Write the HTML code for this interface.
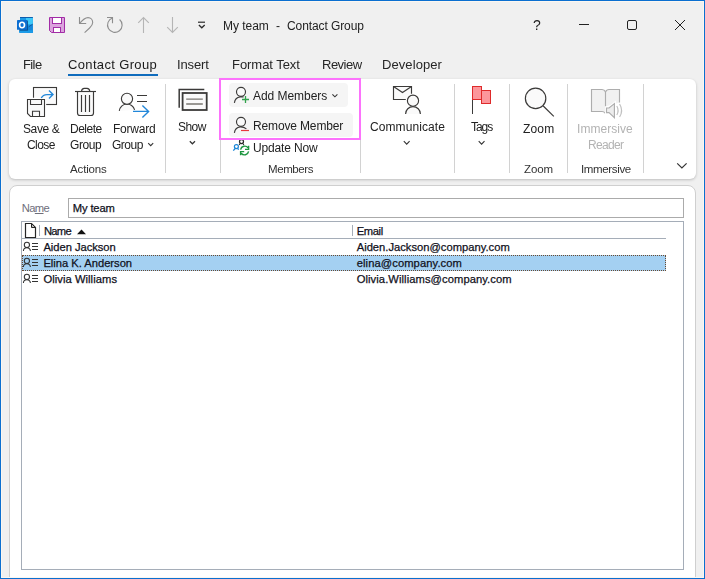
<!DOCTYPE html>
<html><head><meta charset="utf-8"><title>My team - Contact Group</title>
<style>
html,body{margin:0;padding:0}
body{width:705px;height:579px;overflow:hidden;background:#f0f0f0;font-family:"Liberation Sans",sans-serif;color:#222;position:relative}
.a{position:absolute}
.t{position:absolute;white-space:nowrap;line-height:16px;height:16px}
.g{will-change:transform}
.b{-webkit-text-stroke:0.25px #101020}
.t u{text-decoration-thickness:1px;text-underline-offset:1px}
#win{position:absolute;left:0;top:0;width:703px;height:577px;border:1px solid #0b6fd0;box-shadow:inset 0 0 0 1px #fbf7f1;z-index:9;pointer-events:none}
#ribbon{position:absolute;left:9px;top:79px;width:687px;height:100px;background:#fff;border-radius:6px;box-shadow:0 1px 3px rgba(0,0,0,.22)}
#panel{position:absolute;left:9px;top:185px;width:685px;height:400px;background:#fff;border:1px solid #cfcfcf;border-radius:8px 8px 0 0}
.sep{position:absolute;top:84px;height:89px;width:1px;background:#d2d2d2}
.btn{position:absolute;background:#f5f5f5;border-radius:4px}
svg{position:absolute;left:0;top:0;overflow:visible}
</style></head><body>
<div id="ribbon"></div>
<div id="panel"></div>
<div class="a" style="left:68px;top:74px;width:90px;height:2px;background:#0f6cbd"></div>
<div class="sep" style="left:165px"></div>
<div class="sep" style="left:220px"></div>
<div class="sep" style="left:360px"></div>
<div class="sep" style="left:454px"></div>
<div class="sep" style="left:509px"></div>
<div class="sep" style="left:567px"></div>
<div class="sep" style="left:643px"></div>
<div class="btn" style="left:229px;top:83px;width:119px;height:24px"></div>
<div class="btn" style="left:229px;top:113px;width:124px;height:24px"></div>
<!-- name field and list -->
<div class="a" style="left:68px;top:198px;width:614px;height:18px;border:1px solid #ababab;background:#fff"></div>
<div class="a" style="left:21px;top:221px;width:661px;height:347px;border:1px solid #a5adb8;background:#fff"></div>
<div class="a" style="left:22px;top:238px;width:644px;height:1px;background:#a5adb8"></div>
<div class="a" style="left:39px;top:225px;width:1px;height:11px;background:#a5adb8"></div>
<div class="a" style="left:352px;top:225px;width:1px;height:11px;background:#a5adb8"></div>
<div class="a" style="left:22px;top:255px;width:642px;height:14px;background:#a4d0f2;border:1px dotted #6b4a30"></div>
<svg width="705" height="579" viewBox="0 0 705 579" fill="none" stroke-linecap="butt">
<!-- outlook -->
<g stroke="none">
<rect x="20" y="17" width="12.8" height="15.8" fill="#1793e2"/>
<rect x="25.8" y="17.6" width="7" height="6.8" fill="#3ec9f9"/>
<rect x="20" y="17.6" width="5.8" height="3" fill="#1c9ae6"/>
<rect x="20" y="17" width="12.8" height="0.8" fill="#0b4fa0"/>
<path d="M27 28 L32.8 24.3 V32.8 H27 Z" fill="#1487da"/>
<path d="M28.6 26.8 L32.8 24.1" stroke="#0b4a8c" stroke-width="0.7"/>
<rect x="19" y="30.3" width="13.8" height="2.5" fill="#1b9ce9"/>
<rect x="19.2" y="20.6" width="8.7" height="10" fill="#0a3d78" opacity="0.85"/>
<rect x="17" y="20" width="10.1" height="9.8" rx="0.4" fill="#0c6ed1"/>
<ellipse cx="22.05" cy="25" rx="2.45" ry="2.7" stroke="#fff" stroke-width="1.6" fill="none"/>
</g>
<!-- save -->
<path d="M49.5 17.5 H64.5 V32.5 H51.5 L49.5 30.5 Z" fill="#dba3dd" stroke="#a22ca6"/>
<rect x="52.5" y="17.5" width="9" height="6" fill="#fff" stroke="#a22ca6"/>
<rect x="53.5" y="27.5" width="7" height="5" fill="#fff" stroke="#a22ca6"/>
<!-- undo redo -->
<g stroke="#8e8e8e" stroke-width="1.1">
<path d="M79.5 17 V23.5 H86.2"/>
<path d="M79.6 23.4 C82.5 19.8 85.3 17.6 88 17.6 C91 17.6 92.7 20 92.7 22.5 C92.7 25 91.2 26.5 89.6 28 L84.6 32.6"/>
<path d="M107 17.5 H112.5 V23.2"/>
<path d="M112.5 18.1 A7.3 7.3 0 1 0 119.6 19.5"/>
</g>
<g stroke="#b5b5b5" stroke-width="1.1">
<path d="M143.5 33 V18 M138.2 22.9 L143.5 17.6 L148.8 22.9"/>
<path d="M172.5 17 V32 M167.2 27.1 L172.5 32.4 L177.8 27.1"/>
</g>
<path d="M198 22.2 H205" stroke="#2b2b2b" stroke-width="1.2"/><path d="M198.9 25 L201.8 27.8 L204.7 25" stroke="#2b2b2b" stroke-width="1.3"/>
<!-- window controls -->
<g stroke="#222" stroke-width="1">
<path d="M579 24.5 H589"/>
<rect x="627.5" y="20.5" width="9" height="9" rx="1.5"/>
<path d="M675 20 L685 30 M685 20 L675 30"/>
</g>
<!-- save & close -->
<g stroke="#3b3a39" stroke-width="1.1">
<rect x="33.5" y="87.5" width="23" height="17" fill="#fafafa"/>
<path d="M27.5 99.5 H44.5 V116.5 H30.5 L27.5 113.5 Z" fill="#fff" stroke="#fff" stroke-width="3.4"/>
<path d="M27.5 99.5 H44.5 V116.5 H30.5 L27.5 113.5 Z" fill="#fafafa"/>
<path d="M30.5 99.5 V104.5 H41.5 V99.5 M32.5 116.5 V111.2 H39.5 V116.5"/>
</g>
<path d="M41.3 98 C42.5 95.5 44.5 94.6 47 94.6 H52.6 M49 90.6 L53 94.6 L49 98.6" stroke="#2287d9" stroke-width="1.4"/>
<!-- trash -->
<g stroke="#3b3a39" stroke-width="1.15">
<path d="M81.5 91.5 Q81.7 88.4 84.3 88.4 H87 Q89.6 88.4 89.8 91.5"/>
<path d="M77.5 91.5 V113 Q77.5 115.5 80 115.5 H91 Q93.5 115.5 93.5 113 V91.5" fill="#fafafa"/>
<path d="M81.5 95 V112 M85.5 95 V112 M89.5 95 V112"/>
<path d="M75 91.5 H96"/>
</g>
<!-- forward group -->
<g stroke="#3b3a39" stroke-width="1.15">
<path d="M119.3 110.9 A7.8 7.8 0 0 1 134.6 109.8" fill="#fafafa"/>
<circle cx="127" cy="98.8" r="5.6" fill="#fafafa"/>
<path d="M137 95.5 H147 M137 101.5 H147"/>
</g>
<path d="M133 111.4 H148.4 M142.4 105.4 L148.6 111.4 L142.4 117.4" stroke="#2287d9" stroke-width="1.4"/>
<path d="M148.2 143.2 L150.7 145.7 L153.2 143.2" stroke="#333" stroke-width="1.1"/>
<!-- show -->
<path d="M179.2 107.7 V89.4 H204.3" stroke="#3b3a39" stroke-width="1.5"/>
<rect x="182.6" y="93" width="24.1" height="17" stroke="#3b3a39" stroke-width="1.8" fill="#fafafa"/>
<path d="M186.2 99.2 H202.8 M186.2 104 H202.8" stroke="#7a7772" stroke-width="1.3"/>
<path d="M189.8 141.3 L192.4 143.8 L195 141.3" stroke="#333" stroke-width="1.2"/>
<!-- add member -->
<g stroke="#3b3a39" stroke-width="1.15">
<circle cx="241" cy="91.8" r="4.5" fill="#fafafa"/>
<path d="M234.4 102.9 C234.8 99.4 237 97.3 240.2 96.9 H243.6"/>
<circle cx="241" cy="121.8" r="4.5" fill="#fafafa"/>
<path d="M234.4 132.9 C234.8 129.4 237 127.3 240.2 126.9 C242.6 126.8 244.8 127.6 246.4 128.9"/>
</g>
<path d="M242 99.5 H249 M245.5 96 V103" stroke="#31a24c" stroke-width="1.3"/>
<path d="M241 130.5 H249" stroke="#e8373d" stroke-width="1.2"/>
<path d="M332.4 94.3 L334.9 96.8 L337.4 94.3" stroke="#333" stroke-width="1.1"/>
<!-- update now -->
<circle cx="241.5" cy="141.6" r="2" stroke="#2b2a29" stroke-width="1.2"/>
<path d="M239.1 144.9 L240.2 143.5 M243.9 144.9 L242.8 143.5" stroke="#2b2a29" stroke-width="1.1"/>
<circle cx="236.4" cy="146.6" r="2" stroke="#1e88d8" stroke-width="1.2"/>
<path d="M233.3 150.6 L235.2 148.5 M237.6 148.5 L238.7 149.6" stroke="#1e88d8" stroke-width="1.3"/>
<g stroke="#1e9640" stroke-width="1.4">
<path d="M240.6 149.6 A4.2 4.2 0 0 1 248 147.7 M248.6 145.8 V149.4 H245"/>
<path d="M248.6 151.4 A4.2 4.2 0 0 1 241.2 153.3 M240.6 155.2 V151.6 H244.2"/>
</g>
<!-- communicate -->
<g stroke="#3b3a39" stroke-width="1.15">
<path d="M411.5 93.8 V86.5 H393.5 V99.5 H405.8" fill="#fafafa"/>
<path d="M393.5 86.5 L402.5 92.6 L411.5 86.5"/>
<circle cx="413" cy="100.7" r="5.6" fill="#fafafa"/>
<path d="M405.6 114 A7.4 7.4 0 0 1 420.4 114" fill="#fafafa"/>
</g>
<path d="M403.8 141.2 L406.7 144.1 L409.6 141.2" stroke="#333" stroke-width="1.1"/>
<!-- tags -->
<path d="M472.5 86.5 V114" stroke="#3b3a39" stroke-width="1"/>
<rect x="472.5" y="86.5" width="9" height="13" fill="#fc969b" stroke="#de2a2a"/>
<rect x="481.5" y="90.5" width="9" height="13" fill="#fc969b" stroke="#de2a2a"/>
<path d="M478.7 141.2 L481.6 144.1 L484.5 141.2" stroke="#333" stroke-width="1.1"/>
<!-- zoom -->
<circle cx="535.6" cy="98.4" r="10.2" stroke="#3b3a39" stroke-width="1.2" fill="#fafafa"/>
<path d="M543 105.8 L553.8 116.4" stroke="#3b3a39" stroke-width="1.2"/>
<!-- immersive reader -->
<g stroke="#adadad" stroke-width="1.15">
<path d="M605.5 92 Q604.5 89.5 602 89.5 H591.5 V111.5 H602 Q604 111.5 605 113.2" fill="#f1f1f1"/>
<path d="M605.5 106.4 V92 Q606.5 89.5 609 89.5 H619.5 V102.6" fill="#f1f1f1"/>
<path d="M606.5 108 H609 L614.4 103.6 V117.6 L609 112.6 H606.5 Z" fill="#fff" stroke="#fff" stroke-width="3"/>
<path d="M606.5 108 H609 L614.4 103.6 V117.6 L609 112.6 H606.5 Z" fill="#ededed"/>
<path d="M616.8 106 Q619.4 110.5 616.8 115 M619.6 104 Q623.6 110.5 619.6 117" stroke="#c0c0c0"/>
</g>
<path d="M677.2 163.4 L681.9 168 L686.6 163.4" stroke="#333" stroke-width="1.2"/>
<!-- list header icon -->
<path d="M25.5 223.5 H31.5 L35.5 227.5 V237.5 H25.5 Z" fill="#fff" stroke="#262626" stroke-width="1.2"/>
<path d="M31.5 223.5 V227.5 H35.5 Z" stroke="#262626" stroke-width="1" fill="#bdbdbd"/>
<path d="M77 234.3 L81.5 229.6 L86 234.3 Z" fill="#111" stroke="none"/>
<!-- row icons -->
<g stroke="#333" stroke-width="1.05" transform="translate(0 0)">
<circle cx="26.9" cy="244.9" r="2.6"/>
<path d="M23.4 251 A3.5 3.3 0 0 1 30.4 251"/>
<path d="M32 243.5 H38 M32 246.5 H38 M32 249.5 H38"/>
</g>
<g stroke="#333" stroke-width="1.05" transform="translate(0 16)">
<circle cx="26.9" cy="244.9" r="2.6"/>
<path d="M23.4 251 A3.5 3.3 0 0 1 30.4 251"/>
<path d="M32 243.5 H38 M32 246.5 H38 M32 249.5 H38"/>
</g>
<g stroke="#333" stroke-width="1.05" transform="translate(0 32)">
<circle cx="26.9" cy="244.9" r="2.6"/>
<path d="M23.4 251 A3.5 3.3 0 0 1 30.4 251"/>
<path d="M32 243.5 H38 M32 246.5 H38 M32 249.5 H38"/>
</g>
</svg>

<div class="t g" style="left:222.50px;top:18.00px;font-size:12px;letter-spacing:-0.035px;color:#222">My team</div>
<div class="t g" style="left:275.80px;top:18.00px;font-size:12px;letter-spacing:0.000px;color:#222">-</div>
<div class="t g" style="left:286.50px;top:18.00px;font-size:12px;letter-spacing:-0.097px;color:#222">Contact Group</div>
<div class="t g" style="left:532.80px;top:17.00px;font-size:14px;letter-spacing:0.000px;color:#222">?</div>
<div class="t g" style="left:22.60px;top:56.50px;font-size:13px;letter-spacing:-0.606px;color:#262626">File</div>
<div class="t g" style="left:68.40px;top:56.50px;font-size:13px;letter-spacing:0.349px;color:#1a1a1a">Contact Group</div>
<div class="t g" style="left:176.60px;top:56.50px;font-size:13px;letter-spacing:-0.140px;color:#262626">Insert</div>
<div class="t g" style="left:231.60px;top:56.50px;font-size:13px;letter-spacing:-0.051px;color:#262626">Format Text</div>
<div class="t g" style="left:322.30px;top:56.50px;font-size:13px;letter-spacing:-0.507px;color:#262626">Review</div>
<div class="t g" style="left:382.10px;top:56.50px;font-size:13px;letter-spacing:0.084px;color:#262626">Developer</div>
<div class="t g" style="left:23.20px;top:121.00px;font-size:12px;letter-spacing:-0.397px;color:#222">Save &amp;</div>
<div class="t g" style="left:27.40px;top:137.00px;font-size:12px;letter-spacing:-0.551px;color:#222">Close</div>
<div class="t g" style="left:69.50px;top:121.00px;font-size:12px;letter-spacing:-0.503px;color:#222">Delete</div>
<div class="t g" style="left:69.50px;top:137.00px;font-size:12px;letter-spacing:-0.419px;color:#222">Group</div>
<div class="t g" style="left:112.70px;top:121.00px;font-size:12px;letter-spacing:-0.239px;color:#222">Forward</div>
<div class="t g" style="left:111.50px;top:137.00px;font-size:12px;letter-spacing:-0.494px;color:#222">Group</div>
<div class="t g" style="left:70.40px;top:161.00px;font-size:11.5px;letter-spacing:-0.144px;color:#333">Actions</div>
<div class="t g" style="left:178.20px;top:119.00px;font-size:12px;letter-spacing:-0.551px;color:#222">Show</div>
<div class="t g" style="left:253.40px;top:88.00px;font-size:12px;letter-spacing:-0.040px;color:#222">Add Members</div>
<div class="t g" style="left:253.40px;top:118.00px;font-size:12px;letter-spacing:-0.144px;color:#222">Remove Member</div>
<div class="t g" style="left:253.40px;top:140.00px;font-size:12px;letter-spacing:-0.163px;color:#222">Update Now</div>
<div class="t g" style="left:267.70px;top:161.00px;font-size:11.5px;letter-spacing:-0.413px;color:#333">Members</div>
<div class="t g" style="left:369.80px;top:119.00px;font-size:12px;letter-spacing:0.095px;color:#222">Communicate</div>
<div class="t g" style="left:470.80px;top:119.00px;font-size:12px;letter-spacing:-1.049px;color:#222">Tags</div>
<div class="t g" style="left:523.40px;top:121.00px;font-size:12px;letter-spacing:0.174px;color:#222">Zoom</div>
<div class="t g" style="left:524.30px;top:161.00px;font-size:11.5px;letter-spacing:-0.139px;color:#333">Zoom</div>
<div class="t g" style="left:577.20px;top:121.00px;font-size:12px;letter-spacing:0.042px;color:#b3b3b3">Immersive</div>
<div class="t g" style="left:588.10px;top:137.00px;font-size:12px;letter-spacing:-0.672px;color:#b3b3b3">Reader</div>
<div class="t g" style="left:580.60px;top:161.00px;font-size:11.5px;letter-spacing:-0.354px;color:#333">Immersive</div>
<div class="t" style="left:21.80px;top:200.00px;font-size:11.2px;letter-spacing:-0.640px;color:#6e6e7a">Na<u>m</u>e</div>
<div class="t b" style="left:72.80px;top:200.00px;font-size:11.2px;letter-spacing:-0.146px;color:#101020">My team</div>
<div class="t b" style="left:43.90px;top:223.00px;font-size:11.2px;letter-spacing:-0.707px;color:#101020">Name</div>
<div class="t b" style="left:356.70px;top:223.00px;font-size:11.2px;letter-spacing:-0.372px;color:#101020">Email</div>
<div class="t b" style="left:43.40px;top:239.00px;font-size:11.2px;letter-spacing:-0.037px;color:#101020">Aiden Jackson</div>
<div class="t b" style="left:356.70px;top:239.00px;font-size:11.2px;letter-spacing:0.004px;color:#101020">Aiden.Jackson@company.com</div>
<div class="t b" style="left:43.40px;top:255.00px;font-size:11.2px;letter-spacing:-0.015px;color:#101020">Elina K. Anderson</div>
<div class="t b" style="left:356.70px;top:255.00px;font-size:11.2px;letter-spacing:0.089px;color:#101020">elina@company.com</div>
<div class="t b" style="left:43.40px;top:271.00px;font-size:11.2px;letter-spacing:0.062px;color:#101020">Olivia Williams</div>
<div class="t b" style="left:356.70px;top:271.00px;font-size:11.2px;letter-spacing:0.078px;color:#101020">Olivia.Williams@company.com</div>
<div class="a" style="left:219px;top:78px;width:138px;height:58px;border:2px solid #fc72fc"></div>
<div id="win"></div>
</body></html>
